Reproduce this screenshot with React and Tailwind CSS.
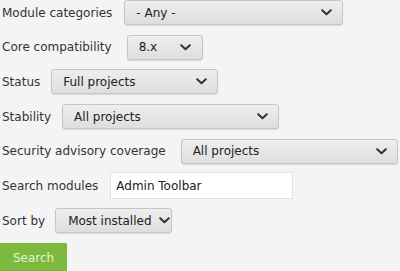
import React from "react";

function Chevron({ className = "" }) {
  return (
    <svg width="11" height="7" viewBox="0 0 11 7" className={`shrink-0 ${className}`}>
      <path d="M1.2 1.2 L5.5 5.3 L9.8 1.2" fill="none" stroke="#333" strokeWidth="2" strokeLinecap="round" strokeLinejoin="round" />
    </svg>
  );
}

function Select({ value, width, ml, padR = "pr-[10px]", padL = "pl-[11px]", gapless }) {
  return (
    <div
      className={`flex h-[25px] shrink-0 items-center justify-between whitespace-nowrap rounded-[3px] border border-[#c6c6c6] bg-gradient-to-b from-[#eeeeee] to-[#dedede] ${padL} ${padR} text-[#222] shadow-[0_1px_1px_rgba(0,0,0,0.12)] ${width} ${ml}`}
    >
      <span className={gapless ? "mr-[7px]" : ""}>{value}</span>
      <Chevron />
    </div>
  );
}

export default function App() {
  return (
    <div
      className="flex h-[271px] w-[400px] flex-col gap-[9.7px] overflow-hidden whitespace-nowrap bg-[#f4f4f4] pl-[2px] text-[12px] text-[#333]"
      style={{ fontFamily: '"DejaVu Sans", sans-serif' }}
    >
      <div className="flex h-[25px] items-center">
        <span>Module categories</span>
        <Select value="- Any -" width="w-[219px]" ml="ml-[12px]" />
      </div>
      <div className="flex h-[25px] items-center">
        <span>Core compatibility</span>
        <Select value="8.x" width="w-[76px]" ml="ml-[15px]" padR="pr-[11px]" />
      </div>
      <div className="flex h-[25px] items-center">
        <span>Status</span>
        <Select value="Full projects" width="w-[167px]" ml="ml-[11px]" />
      </div>
      <div className="flex h-[25px] items-center">
        <span>Stability</span>
        <Select value="All projects" width="w-[217px]" ml="ml-[11px]" />
      </div>
      <div className="flex h-[25px] items-center">
        <span>Security advisory coverage</span>
        <Select value="All projects" width="w-[217px]" ml="ml-[15px]" />
      </div>
      <div className="flex h-[25px] items-center">
        <span>Search modules</span>
        <div className="ml-[12px] flex h-[27px] w-[183px] shrink-0 items-center border border-[#e2e2e2] bg-white pl-[5px] text-[#222]">
          Admin Toolbar
        </div>
      </div>
      <div className="flex h-[25px] items-center">
        <span>Sort by</span>
        <Select value="Most installed" width="w-[117px]" ml="ml-[10px]" padL="pl-[12px]" gapless />
      </div>
      <div className="flex">
        <button className="ml-[-2px] flex h-[30px] w-[67px] items-start justify-center bg-[#7cba3e] pt-[6px] text-[12px] text-[#e6f2d6]">
          Search
        </button>
      </div>
    </div>
  );
}
